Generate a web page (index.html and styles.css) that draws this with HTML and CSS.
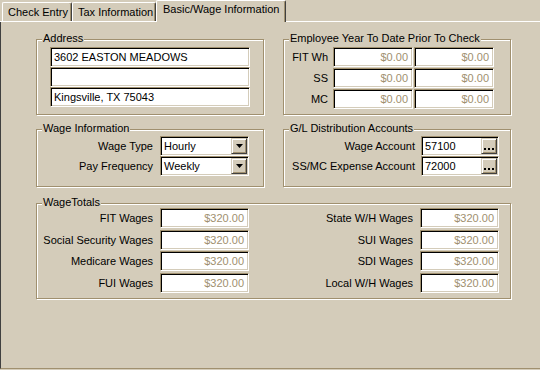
FILE: index.html
```html
<!DOCTYPE html>
<html>
<head>
<meta charset="utf-8">
<link rel="stylesheet" href="styles.css">
</head>
<body>
<div class="window">
  <div class="tabs">
    <div class="tab tab-check">Check Entry</div>
    <div class="tab tab-tax">Tax Information</div>
    <div class="tab tab-basic active">Basic/Wage Information</div>
  </div>
  <div class="panel">
    <div class="layout">
      <div class="group">
        <span class="legend">Address</span>
        <div class="address-rows">
          <div class="field"><span class="val">3602 EASTON MEADOWS</span></div>
          <div class="field"><span class="val"></span></div>
          <div class="field"><span class="val">Kingsville, TX 75043</span></div>
        </div>
      </div>
      <div class="group">
        <span class="legend">Employee Year To Date Prior To Check</span>
        <div class="ytd-grid">
          <span class="lbl">FIT Wh</span>
          <div class="field dis"><span class="val">$0.00</span></div>
          <div class="field dis"><span class="val">$0.00</span></div>
          <span class="lbl">SS</span>
          <div class="field dis"><span class="val">$0.00</span></div>
          <div class="field dis"><span class="val">$0.00</span></div>
          <span class="lbl">MC</span>
          <div class="field dis"><span class="val">$0.00</span></div>
          <div class="field dis"><span class="val">$0.00</span></div>
        </div>
      </div>
      <div class="group">
        <span class="legend">Wage Information</span>
        <div class="wage-grid">
          <span class="lbl">Wage Type</span>
          <div class="field combo"><span class="val">Hourly</span><span class="btn"><svg width="7" height="4" viewBox="0 0 7 4"><polygon points="0,0 7,0 3.5,4" fill="#000"/></svg></span></div>
          <span class="lbl">Pay Frequency</span>
          <div class="field combo"><span class="val">Weekly</span><span class="btn"><svg width="7" height="4" viewBox="0 0 7 4"><polygon points="0,0 7,0 3.5,4" fill="#000"/></svg></span></div>
        </div>
      </div>
      <div class="group">
        <span class="legend">G/L Distribution Accounts</span>
        <div class="gl-grid">
          <span class="lbl">Wage Account</span>
          <div class="field combo"><span class="val">57100</span><span class="btn"><svg width="10" height="2" viewBox="0 0 10 2"><rect x="0" y="0" width="2" height="2"/><rect x="4" y="0" width="2" height="2"/><rect x="8" y="0" width="2" height="2"/></svg></span></div>
          <span class="lbl">SS/MC Expense Account</span>
          <div class="field combo"><span class="val">72000</span><span class="btn"><svg width="10" height="2" viewBox="0 0 10 2"><rect x="0" y="0" width="2" height="2"/><rect x="4" y="0" width="2" height="2"/><rect x="8" y="0" width="2" height="2"/></svg></span></div>
        </div>
      </div>
      <div class="group totals">
        <span class="legend">WageTotals</span>
        <div class="totals-grid">
          <span class="lbl">FIT Wages</span>
          <div class="field dis"><span class="val">$320.00</span></div>
          <span class="lbl">State W/H Wages</span>
          <div class="field dis"><span class="val">$320.00</span></div>
          <span class="lbl">Social Security Wages</span>
          <div class="field dis"><span class="val">$320.00</span></div>
          <span class="lbl">SUI Wages</span>
          <div class="field dis"><span class="val">$320.00</span></div>
          <span class="lbl">Medicare Wages</span>
          <div class="field dis"><span class="val">$320.00</span></div>
          <span class="lbl">SDI Wages</span>
          <div class="field dis"><span class="val">$320.00</span></div>
          <span class="lbl">FUI Wages</span>
          <div class="field dis"><span class="val">$320.00</span></div>
          <span class="lbl">Local W/H Wages</span>
          <div class="field dis"><span class="val">$320.00</span></div>
        </div>
      </div>
    </div>
  </div>
</div>
</body>
</html>
```
FILE: styles.css
```css
html, body {
  margin: 0;
  padding: 0;
  background: #d4ccba;
}
body {
  font-family: "Liberation Sans", Arial, sans-serif;
  font-size: 11px;
  color: #000;
}
.window {
  width: 540px;
  height: 370px;
  overflow: hidden;
}
.tabs {
  display: flex;
  align-items: flex-end;
  height: 21px;
  padding-left: 2px;
  border-bottom: 1px solid #fff;
}
.tab {
  box-sizing: border-box;
  height: 19px;
  border-top: 1px solid #fff;
  border-left: 1px solid #fff;
  border-right: 1px solid #404040;
  box-shadow: inset -1px 0 0 #a0906f;
  border-top-left-radius: 2px;
  border-top-right-radius: 2px;
  padding: 2px 0 0 5px;
  line-height: 14px;
  white-space: nowrap;
}
.tab-check { width: 70px; }
.tab-tax { width: 84px; }
.tab-basic { width: 130px; }
.tab.active {
  height: 22px;
  margin-bottom: -1px;
  background: #d4ccba;
  padding: 1px 0 0 6px;
}
.panel {
  box-sizing: border-box;
  height: 347px;
  border-left: 1px solid #404040;
  border-bottom: 1px solid #a0906f;
  padding: 17px 0 0 35px;
}
.layout {
  display: grid;
  grid-template-columns: 228px 228px;
  grid-template-rows: 76px 58px 98px;
  column-gap: 19px;
  row-gap: 14px;
}
.group {
  position: relative;
  box-sizing: border-box;
  border: 1px solid #a0906f;
  box-shadow: 1px 1px 0 #fff, inset 1px 1px 0 #fff;
}
.legend {
  position: absolute;
  top: -8px;
  left: 5px;
  padding: 0 1px;
  background: #d4ccba;
  line-height: 13px;
  white-space: nowrap;
}
.totals {
  grid-column: 1 / 3;
  margin-top: 2px;
}
.field {
  box-sizing: border-box;
  height: 20px;
  border: 1px solid;
  border-color: #a0906f #fff #fff #a0906f;
  padding: 1px;
  box-shadow: inset 1px 1px 0 #000, inset -1px -1px 0 #d4ccba;
  background: #fff;
  display: flex;
}
.val {
  flex: 1;
  line-height: 16px;
  padding: 0 2px;
  white-space: nowrap;
  overflow: hidden;
}
.dis .val {
  color: #a0906f;
  text-align: right;
  padding-right: 3px;
}
.btn {
  box-sizing: border-box;
  width: 16px;
  height: 16px;
  background: #d4ccba;
  border: 1px solid;
  border-color: #d4ccba #404040 #404040 #d4ccba;
  box-shadow: inset 1px 1px 0 #fff, inset -1px -1px 0 #a0906f;
  display: flex;
  align-items: center;
  justify-content: center;
}
.combo .btn svg { display: block; }
.gl-grid .btn {
  align-items: flex-end;
  padding-bottom: 3px;
}
.lbl {
  text-align: right;
  line-height: 20px;
  white-space: nowrap;
}
.address-rows {
  display: flex;
  flex-direction: column;
  padding: 7px 0 0 13px;
  width: 200px;
}
.ytd-grid {
  display: grid;
  grid-template-columns: 49px 80px 80px;
  grid-auto-rows: 20px;
  column-gap: 0;
  row-gap: 1px;
  padding-top: 7px;
}
.ytd-grid .lbl { padding-right: 5px; width: 44px; }
.ytd-grid .field + .field { margin-left: 1px; width: 80px; }
.ytd-grid .field { width: 80px; }
.wage-grid {
  display: grid;
  grid-template-columns: 116px 89px;
  grid-auto-rows: 20px;
  column-gap: 7px;
  padding-top: 6px;
}
.gl-grid {
  display: grid;
  grid-template-columns: 131px 78px;
  grid-auto-rows: 20px;
  column-gap: 6px;
  padding-top: 6px;
}
.totals-grid {
  display: grid;
  grid-template-columns: 116px 89px 157px 79px;
  grid-template-rows: 22px 21px 22px 20px;
  column-gap: 7px;
  padding-top: 4px;
}
.totals-grid .field, .totals-grid .lbl {
  align-self: start;
}
```
